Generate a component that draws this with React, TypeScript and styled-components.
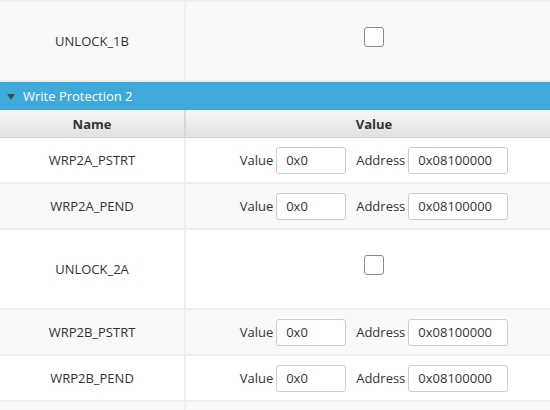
import React from 'react';
import styled, { createGlobalStyle } from 'styled-components';

const GlobalStyle = createGlobalStyle`
  html, body {
    margin: 0;
    padding: 0;
    background: #ffffff;
    overflow: hidden;
  }
  body {
    font-family: "Open Sans", "Noto Sans", sans-serif;
    font-size: 13px;
    color: #333333;
  }
`;

const Table = styled.div`
  width: 562px;
  display: flex;
  flex-direction: column;
  border-top: 2px solid #efefef;
`;

const Row = styled.div<{ $alt?: boolean; $tall?: boolean }>`
  display: flex;
  height: ${(p) => (p.$tall ? '78px' : '44px')};
  background: ${(p) => (p.$alt ? '#f9f9f9' : '#ffffff')};
  border-bottom: 2px solid #efefef;
`;

const NameCell = styled.div`
  width: 184px;
  flex-shrink: 0;
  border-right: 2px solid #efefef;
  display: flex;
  align-items: center;
  justify-content: center;
`;

const ValueCell = styled.div`
  flex: 1;
  display: flex;
  align-items: center;
  justify-content: center;
`;

const SectionBar = styled.div`
  height: 28px;
  background: #3ea9db;
  color: #ffffff;
  display: flex;
  align-items: center;
  padding-left: 7px;
  gap: 8px;
  font-size: 13px;
`;

const Caret = styled.span`
  width: 0;
  height: 0;
  border-left: 4.5px solid transparent;
  border-right: 4.5px solid transparent;
  border-top: 6px solid #4a4a4a;
  margin-top: 1px;
`;

const HeaderRow = styled.div`
  display: flex;
  height: 27px;
  background: linear-gradient(#f6f6f6, #e2e2e2);
  border-bottom: 1px solid #d0d0d0;
  font-weight: bold;
  color: #333333;
`;

const HeaderCell = styled.div<{ $first?: boolean }>`
  ${(p) => (p.$first ? 'width: 184px; flex-shrink: 0; border-right: 2px solid #d8d8d8;' : 'flex: 1;')}
  display: flex;
  align-items: center;
  justify-content: center;
`;

const Field = styled.label`
  display: flex;
  align-items: center;
  gap: 3px;
  & + & {
    margin-left: 10px;
  }
`;

const TextInput = styled.input<{ $w: number }>`
  width: ${(p) => p.$w}px;
  height: 27px;
  box-sizing: border-box;
  border: 1px solid #cccccc;
  border-radius: 3px;
  padding: 0 9px;
  font-family: inherit;
  font-size: 13px;
  color: #333333;
  background: #ffffff;
  outline: none;
`;

const Check = styled.span`
  width: 20px;
  height: 20px;
  box-sizing: border-box;
  border: 1px solid #8a8a8a;
  border-radius: 3px;
  background: #ffffff;
  margin-bottom: 8px;
`;

const rows = [
  { name: 'WRP2A_PSTRT', kind: 'range' },
  { name: 'WRP2A_PEND', kind: 'range' },
  { name: 'UNLOCK_2A', kind: 'check' },
  { name: 'WRP2B_PSTRT', kind: 'range' },
  { name: 'WRP2B_PEND', kind: 'range' },
  { name: '', kind: 'empty' },
];

export default function App() {
  return (
    <>
      <GlobalStyle />
      <Table>
        <Row $alt $tall>
          <NameCell>UNLOCK_1B</NameCell>
          <ValueCell>
            <Check />
          </ValueCell>
        </Row>
        <SectionBar>
          <Caret />
          Write Protection 2
        </SectionBar>
        <HeaderRow>
          <HeaderCell $first>Name</HeaderCell>
          <HeaderCell>Value</HeaderCell>
        </HeaderRow>
        {rows.map((r, i) => (
          <Row key={i} $alt={i % 2 === 1} $tall={r.kind === 'check'}>
            <NameCell>{r.name}</NameCell>
            <ValueCell>
              {r.kind === 'range' && (
                <>
                  <Field>
                    Value
                    <TextInput $w={70} defaultValue="0x0" />
                  </Field>
                  <Field>
                    Address
                    <TextInput $w={100} defaultValue="0x08100000" />
                  </Field>
                </>
              )}
              {r.kind === 'check' && <Check />}
            </ValueCell>
          </Row>
        ))}
      </Table>
    </>
  );
}
